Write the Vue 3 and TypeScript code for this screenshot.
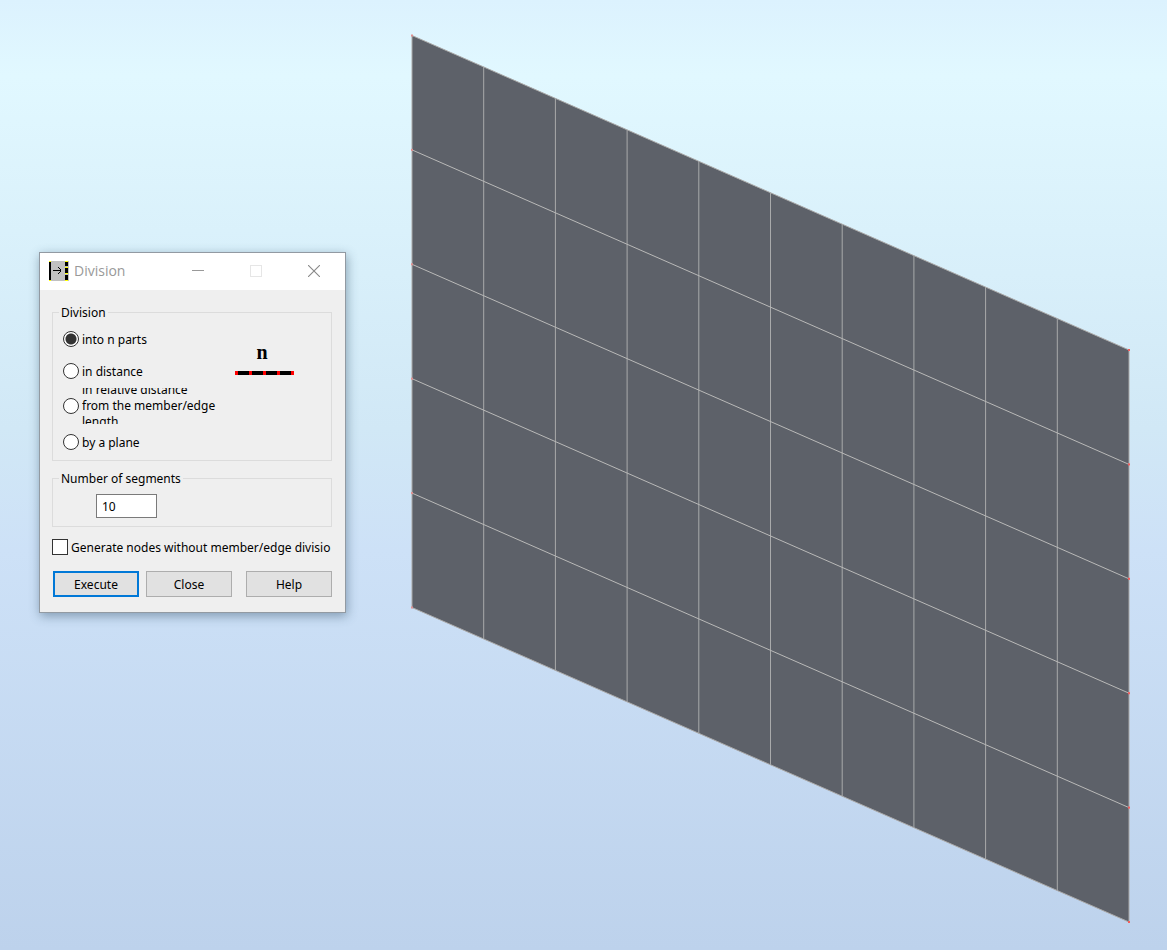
<script setup lang="ts">
import { ref } from 'vue'

interface Line { x1: number; y1: number; x2: number; y2: number }

const modes = [
  { id: 'parts', label: 'into n parts' },
  { id: 'distance', label: 'in distance' },
  { id: 'relative', label: 'in relative distance from the member/edge length' },
  { id: 'plane', label: 'by a plane' },
]
const mode = ref('parts')
const segments = ref('10')
const nodesOnly = ref(false)

// Corners of the projected plate
const left = 412
const right = 1129
const top = 35.5
const drop = 314.5
const height = 572
const columns = 10
const rows = 5

const verticals: Line[] = Array.from({ length: columns - 1 }, (_, i) => {
  const t = (i + 1) / columns
  const x = left + (right - left) * t
  return { x1: x, y1: top + drop * t, x2: x, y2: top + drop * t + height }
})
const slopes: Line[] = Array.from({ length: rows - 1 }, (_, i) => {
  const y = top + (height * (i + 1)) / rows
  return { x1: left, y1: y, x2: right, y2: y + drop }
})
const nodes = Array.from({ length: rows + 1 }, (_, i) => top + (height * i) / rows)
const outline = `${left},${top} ${right},${top + drop} ${right},${top + drop + height} ${left},${top + height}`
</script>

<template>
  <main class="workspace">
    <svg class="scene" viewBox="0 0 1167 950" role="img" aria-label="Divided plate">
      <polygon class="plate" :points="outline" />
      <line v-for="(l, i) in verticals" :key="'v' + i" class="vertical" v-bind="l" />
      <line v-for="(l, i) in slopes" :key="'s' + i" class="slope" v-bind="l" />
      <g v-for="(y, i) in nodes" :key="'n' + i">
        <rect class="node faint" :x="left - 1" :y="y - 1" width="2" height="2" />
        <rect class="node" :x="right - 1" :y="y + drop - 1" width="2" height="2" />
      </g>
    </svg>

    <section class="dialog" role="dialog" aria-labelledby="dialog-title">
      <header class="titlebar">
        <svg class="app-icon" viewBox="0 0 20 20" shape-rendering="crispEdges" aria-hidden="true">
          <rect width="20" height="20" fill="#c0c0c0" />
          <rect width="2" height="20" fill="#000" />
          <rect width="2" height="1" fill="#ff0" />
          <rect y="19" width="2" height="1" fill="#ff0" />
          <rect x="16" width="3" height="20" fill="#000" />
          <path d="M16 0h3v1h-3zM16 6h3v1h-3zM16 12h3v1h-3zM16 19h3v1h-3z" fill="#ff0" />
          <path d="M16 5h3v1h-3zM16 13h3v1h-3z" fill="#c0c0c0" />
          <path d="M4 9h8v1H4zM9 6h1v1H9zM10 7h1v1h-1zM11 8h1v3h-1zM10 11h1v1h-1zM9 12h1v1H9z" fill="#000" />
        </svg>
        <h1 id="dialog-title">Division</h1>
        <div class="window-buttons">
          <button type="button" aria-label="Minimize">
            <svg viewBox="0 0 12 12"><path d="M0 5.500h12" stroke="#999" /></svg>
          </button>
          <button type="button" aria-label="Maximize" disabled>
            <svg viewBox="0 0 12 12"><rect x=".5" y=".5" width="11" height="11" fill="none" stroke="#e6e6e6" /></svg>
          </button>
          <button type="button" aria-label="Close window">
            <svg viewBox="0 0 12 12"><path d="M0 0l12 12M12 0L0 12" stroke="#888" stroke-width="1.100" /></svg>
          </button>
        </div>
      </header>

      <form class="body" @submit.prevent>
        <fieldset class="modes">
          <legend>Division</legend>
          <div class="options">
            <label v-for="m in modes" :key="m.id" class="option" :class="m.id">
              <input v-model="mode" type="radio" name="mode" :value="m.id" />
              <span class="clip"><span>{{ m.label }}</span></span>
            </label>
          </div>
          <figure class="preview">
            <figcaption>n</figcaption>
            <svg viewBox="0 0 59 4" shape-rendering="crispEdges" aria-hidden="true">
              <rect width="59" height="4" fill="#000" />
              <path d="M0 0h3v4H0zM14 0h3v4h-3zM28 0h3v4h-3zM42 0h3v4h-3zM56 0h3v4h-3z" fill="#f00" />
            </svg>
          </figure>
        </fieldset>

        <fieldset class="count">
          <legend>Number of segments</legend>
          <input v-model="segments" type="text" aria-label="Number of segments" />
        </fieldset>

        <label class="nodes-only">
          <input v-model="nodesOnly" type="checkbox" />
          <span>Generate nodes without member/edge divisio</span>
        </label>

        <div class="actions">
          <button type="submit" class="primary">Execute</button>
          <button type="button">Close</button>
          <button type="button" class="help">Help</button>
        </div>
      </form>
    </section>
  </main>
</template>

<style>
body {
  margin: 0;
}
</style>

<style scoped>
.workspace {
  position: relative;
  min-height: 100vh;
  overflow: hidden;
  background: linear-gradient(#dcf2fe 0%, #e1f8ff 8%, #d1e8f6 45%, #cde1f7 58%, #bdd2ec 100%);
  color: #000;
  font: 12px/16px "Noto Sans", sans-serif;
}
.scene {
  display: block;
  width: 100%;
}
.plate {
  fill: #5d6169;
  stroke: #aaa9a8;
}
.vertical {
  stroke: #a9aaab;
}
.slope {
  stroke: #b9b9b8;
}
.node {
  fill: #f55c5c;
}
.node.faint {
  fill: #e09090;
}
.dialog {
  position: absolute;
  left: 39px;
  top: 252px;
  box-sizing: border-box;
  width: 307px;
  border: 1px solid #929aa2;
  background: #efefef;
  box-shadow: 1px 3px 10px rgba(40, 70, 95, 0.45);
}
.titlebar {
  display: flex;
  align-items: center;
  box-sizing: border-box;
  height: 37px;
  padding: 0 2px 1px 9px;
  background: #fff;
}
.app-icon {
  width: 20px;
  height: 20px;
}
h1 {
  flex: 1;
  margin: 0 0 0 5px;
  color: #999;
  font: 14px/20px "Open Sans", "Noto Sans", sans-serif;
}
.window-buttons {
  display: flex;
}
.window-buttons button {
  display: grid;
  place-items: center;
  width: 58px;
  height: 36px;
  padding: 0;
  border: 0;
  background: none;
}
.window-buttons svg {
  width: 12px;
  height: 12px;
}
.body {
  padding: 15px 13px 15px 12px;
}
fieldset {
  min-width: 0;
  margin: 0;
  padding: 0 6px;
  border: 1px solid #dcdcdc;
}
legend {
  padding: 0 2px;
  line-height: 15px;
}
.modes {
  position: relative;
  padding-bottom: 2px;
}
.options {
  padding: 3px 0 0 4px;
}
.option {
  display: flex;
  align-items: center;
  gap: 3px;
  width: 156px;
  height: 32px;
}
.option.relative {
  height: 38px;
}
.option.plane {
  height: 33px;
}
.option input,
.nodes-only input {
  flex: none;
  appearance: none;
  box-sizing: border-box;
  width: 16px;
  height: 16px;
  margin: 0;
  border: 1px solid #333;
  background: #fff;
}
.option input {
  border-radius: 50%;
}
.option input:checked {
  background: radial-gradient(circle, #333 5px, #fff 6px);
}
.clip {
  display: flex;
  align-items: center;
  max-height: 36px;
  padding-top: 2px;
  overflow: hidden;
}
.option.relative .clip {
  width: 136px;
  padding-top: 0;
}
.preview {
  position: absolute;
  right: 37px;
  top: 22px;
  width: 59px;
  margin: 0;
}
.preview figcaption {
  padding-right: 5px;
  font: bold 20px/20px "Liberation Serif", serif;
  text-align: center;
}
.preview svg {
  display: block;
  width: 59px;
  height: 4px;
  margin-top: 9px;
}
.count {
  margin-top: 10px;
  padding-bottom: 8px;
}
.count input {
  display: block;
  box-sizing: border-box;
  width: 61px;
  height: 24px;
  margin: 8px 0 0 37px;
  padding: 0 5px;
  border: 1px solid #7a7a7a;
  background: #fff;
  color: inherit;
  font: inherit;
}
.nodes-only {
  display: flex;
  align-items: center;
  gap: 3px;
  height: 18px;
  margin-top: 11px;
  white-space: nowrap;
}
.nodes-only span {
  padding-top: 2px;
}
.actions {
  display: flex;
  gap: 7px;
  margin: 15px 0 0 1px;
}
.actions button {
  box-sizing: border-box;
  width: 86px;
  height: 26px;
  padding: 2px 0 0;
  border: 1px solid #adadad;
  border-radius: 0;
  background: #e1e1e1;
  color: inherit;
  font: inherit;
}
.actions .primary {
  border: 2px solid #0078d7;
}
.actions .help {
  margin-left: auto;
}
</style>
